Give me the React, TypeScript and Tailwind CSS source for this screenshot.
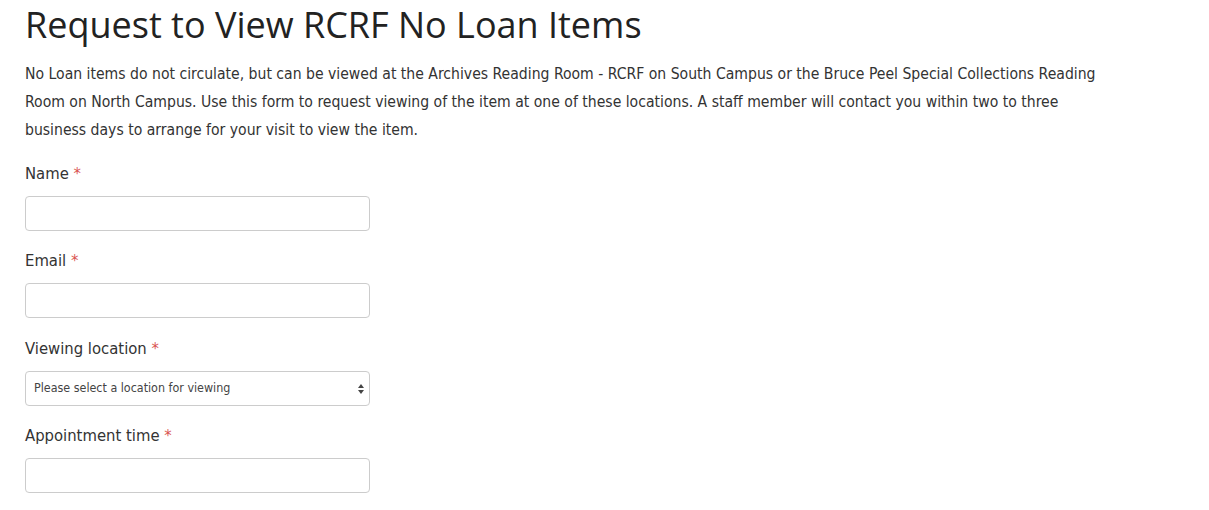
import React from "react";

function Label({ children }: { children: React.ReactNode }) {
  return (
    <label className="block text-[16.5px] leading-[24px] text-[#333] mb-[10px]">
      {children} <span className="text-[#d9534f]">*</span>
    </label>
  );
}

export default function App() {
  return (
    <div className="bg-white min-h-[510px] px-[25px] pt-[2px] text-[#333]" style={{ fontFamily: '"DejaVu Sans Condensed", "Liberation Sans Narrow", sans-serif' }}>
      <h1 className="text-[36px] leading-[46px] text-[#222] font-normal" style={{ fontFamily: '"Open Sans", sans-serif' }}>
        Request to View RCRF No Loan Items
      </h1>
      <p className="mt-[12px] text-[15.6px] leading-[28px] w-[1100px]">
        No Loan items do not circulate, but can be viewed at the Archives Reading Room - RCRF on South Campus or the Bruce Peel Special Collections Reading
        <br />
        Room on North Campus. Use this form to request viewing of the item at one of these locations. A staff member will contact you within two to three
        <br />
        business days to arrange for your visit to view the item.
      </p>
      <form className="mt-[18px] flex flex-col gap-[18px] w-[345px]">
        <div>
          <Label>Name</Label>
          <input className="block w-full h-[35px] border border-[#ccc] rounded-[4px] px-3" />
        </div>
        <div>
          <Label>Email</Label>
          <input className="block w-full h-[35px] border border-[#ccc] rounded-[4px] px-3" />
        </div>
        <div className="pt-[1px]">
          <Label>Viewing location</Label>
          <div className="relative h-[35px] border border-[#ccc] rounded-[4px] flex items-center px-[8px] text-[12.4px] text-[#444]">
            Please select a location for viewing
            <svg className="absolute right-[4px] top-1/2 -translate-y-1/2" width="8" height="12" viewBox="0 0 8 12">
              <path d="M4 1 L7 5 L1 5 Z" fill="#444" />
              <path d="M4 11 L7 7 L1 7 Z" fill="#444" />
            </svg>
          </div>
        </div>
        <div>
          <Label>Appointment time</Label>
          <input className="block w-full h-[35px] border border-[#ccc] rounded-[4px] px-3" />
        </div>
      </form>
    </div>
  );
}
